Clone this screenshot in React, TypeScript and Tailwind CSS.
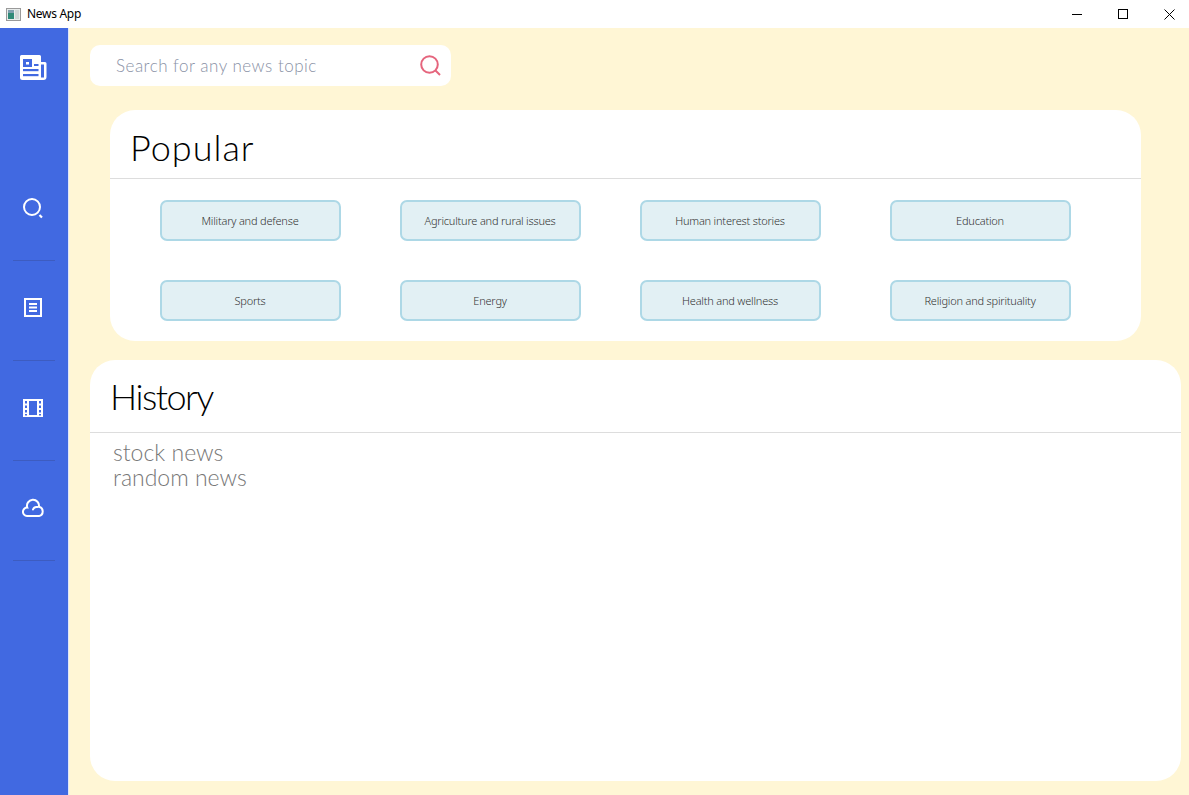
const topics = [
  ["Military and defense", "Agriculture and rural issues", "Human interest stories", "Education"],
  ["Sports", "Energy", "Health and wellness", "Religion and spirituality"],
];

function NewsIcon() {
  return (
    <svg width="28" height="28" viewBox="0 0 28 28">
      <path
        d="M1 2.500 A1.500 1.500 0 0 1 2.500 1 H20.500 A1.500 1.500 0 0 1 22 2.500 V8 H26 A1.500 1.500 0 0 1 27.500 9.500 V23 A3 3 0 0 1 24.500 26 H3.500 A2.500 2.500 0 0 1 1 23.500 Z"
        fill="white"
      />
      <rect x="4" y="5" width="9" height="8" fill="#4169e1" />
      <rect x="7" y="8" width="3" height="2.500" fill="white" />
      <rect x="15" y="10" width="4.500" height="2" fill="#4169e1" />
      <rect x="4" y="15" width="15.500" height="2.200" fill="#4169e1" />
      <rect x="4" y="20" width="15.500" height="2.200" fill="#4169e1" />
      <rect x="22" y="10.500" width="3" height="13" fill="#4169e1" />
    </svg>
  );
}

function SearchThin() {
  return (
    <svg width="22" height="22" viewBox="0 0 22 22" fill="none" stroke="white" strokeWidth="2">
      <circle cx="10" cy="10" r="8" />
      <path d="M17.500 18 L20 20.500" strokeWidth="2.200" />
    </svg>
  );
}

function DocIcon() {
  return (
    <svg width="18" height="19" viewBox="0 0 18 19" fill="none" stroke="white" strokeWidth="2">
      <rect x="1" y="1" width="16" height="17" />
      <path d="M5 6 H13 M5 9.500 H13 M5 13 H13" />
    </svg>
  );
}

function FilmIcon() {
  return (
    <svg width="20" height="18" viewBox="0 0 20 18">
      <path
        fillRule="evenodd"
        fill="white"
        d="M0 0 H20 V18 H0 Z M2 2 V4.500 H4 V2 Z M2 6.500 V9 H4 V6.500 Z M2 11 V13.500 H4 V11 Z M2 15 V16.500 H4 V15 Z M16 2 V4.500 H18 V2 Z M16 6.500 V9 H18 V6.500 Z M16 11 V13.500 H18 V11 Z M16 15 V16.500 H18 V15 Z M6 2 V16 H14 V2 Z"
      />
    </svg>
  );
}

function CloudIcon() {
  return (
    <svg width="22" height="19" viewBox="0 0 22 19" fill="none" stroke="white" strokeWidth="2" strokeLinecap="round">
      <path d="M5 18 A4.200 4.200 0 0 1 5.300 9.600 A6 6 0 1 1 16.900 8.800 A4.700 4.700 0 0 1 17 18 Z" />
      <path d="M11 11.500 A4 4 0 0 1 15.500 9" />
    </svg>
  );
}

function SideItem({ children }: { children: React.ReactNode }) {
  return (
    <div className="h-[100px] mx-[13px] pr-[2px] pb-[6px] flex items-center justify-center border-b border-[#3d5cc0]">
      {children}
    </div>
  );
}

function TopicButton({ label, className = "" }: { label: string; className?: string }) {
  return (
    <button
      className={`w-[181px] h-[41px] pt-[1px] pr-[1px] rounded-[7px] bg-[#e2f0f4] border-2 border-[#add8e6] text-[11px] font-light text-[#333] ${className}`}
      style={{ fontFamily: "'Noto Sans', sans-serif", letterSpacing: "-0.2px" }}
    >
      {label}
    </button>
  );
}

export default function App() {
  return (
    <div className="w-[1189px] h-[795px] flex flex-col overflow-hidden bg-white" style={{ fontFamily: "'Lato', sans-serif" }}>
      <div className="h-[28px] flex items-center bg-white shrink-0">
        <svg className="ml-[6px]" width="15" height="13" viewBox="0 0 15 13">
          <rect x="0.500" y="0.500" width="14" height="12" fill="#e8eceb" stroke="#9a9a9a" />
          <rect x="2" y="2" width="6" height="9" fill="#2f8a78" />
          <rect x="2" y="2" width="6" height="3" fill="#7fa0b0" />
          <rect x="9" y="2" width="4" height="9" fill="#cfd6d6" />
        </svg>
        <span className="ml-[6px] text-[12px] tracking-[-0.3px] text-black" style={{ fontFamily: "'Noto Sans', sans-serif" }}>News App</span>
        <div className="ml-auto mr-[-3px] flex items-center">
          <div className="w-[46px] flex justify-center"><div className="w-[10px] h-px bg-black" /></div>
          <div className="w-[46px] flex justify-center"><div className="w-[10px] h-[10px] border border-black" /></div>
          <div className="w-[46px] flex justify-center">
            <svg width="11" height="11" viewBox="0 0 11 11" stroke="black" strokeWidth="1"><path d="M0.500 0.500 L10.500 10.500 M10.500 0.500 L0.500 10.500" /></svg>
          </div>
        </div>
      </div>

      <div className="flex flex-1 min-h-0 bg-[#fff6d5]">
        <aside className="w-[69px] shrink-0 bg-[#4169e1] border-r border-[#dfe6fa]">
          <div className="h-[81px] pr-[2px] pb-[1px] flex items-center justify-center">
            <NewsIcon />
          </div>
          <div className="h-[52px]" />
          <SideItem><SearchThin /></SideItem>
          <SideItem><DocIcon /></SideItem>
          <SideItem><FilmIcon /></SideItem>
          <SideItem><CloudIcon /></SideItem>
        </aside>

        <main className="flex-1 min-w-0 pl-[21px] pt-[17px]">
          <div className="w-[361px] h-[41px] bg-white rounded-[10px] flex items-center pl-[26px] pr-[10px]">
            <span className="text-[17px] font-light text-[#8a92a6] tracking-[0.5px]">Search for any news topic</span>
            <svg className="ml-auto" width="21" height="21" viewBox="0 0 21 21" fill="none" stroke="#e5657d" strokeWidth="2">
              <circle cx="9.500" cy="9.500" r="8.300" />
              <path d="M15.500 15.500 L20 20" />
            </svg>
          </div>

          <section className="ml-[20px] mt-[24px] w-[1031px] h-[231px] bg-white rounded-[25px]">
            <div className="h-[69px] pl-[20px] pt-[5px] flex items-center border-b border-[#dddddd]">
              <h2 className="text-[36px] font-light text-black tracking-[1px]">Popular</h2>
            </div>
            <div className="pt-[21px] pl-[50px] flex flex-col gap-[39px]">
              {topics.map((row) => (
                <div key={row[0]} className="flex gap-[59px]">
                  <TopicButton label={row[0]} />
                  <TopicButton label={row[1]} />
                  <TopicButton label={row[2]} />
                  <TopicButton label={row[3]} className="ml-[10px]" />
                </div>
              ))}
            </div>
          </section>

          <section className="mt-[19px] w-[1091px] h-[421px] bg-white rounded-[25px]">
            <div className="h-[73px] pl-[20px] flex items-center border-b border-[#dddddd]">
              <h2 className="text-[36px] font-light text-black tracking-[-1.5px]">History</h2>
            </div>
            <div className="pl-[23px] pt-[7px] text-[23px] leading-[25px] font-light text-[#777777]">
              <p>stock news</p>
              <p>random news</p>
            </div>
          </section>
        </main>
      </div>
    </div>
  );
}
